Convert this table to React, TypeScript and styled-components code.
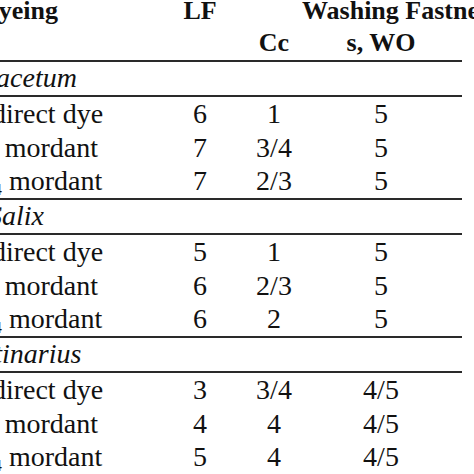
import React from "react";
import styled, { createGlobalStyle } from "styled-components";

const GlobalStyle = createGlobalStyle`
   html, body {
      margin: 0;
      padding: 0;
      background: #ffffff;
      overflow: hidden;
   }
`;

interface GroupData {
   name: string;
   rows: { label: React.ReactNode; lf: string; cc: string; wo: string }[];
}

const Sub = styled.span`
   font-size: 60%;
   line-height: 0;
   vertical-align: -0.3em;
`;

const groups: GroupData[] = [
   {
      name: "Tanacetum",
      rows: [
         { label: "Only direct dye", lf: "6", cc: "1", wo: "5" },
         { label: "Alum mordant", lf: "7", cc: "3/4", wo: "5" },
         { label: <>FeSO<Sub>4</Sub> mordant</>, lf: "7", cc: "2/3", wo: "5" },
      ],
   },
   {
      name: "Salix",
      rows: [
         { label: "Only direct dye", lf: "5", cc: "1", wo: "5" },
         { label: "Alum mordant", lf: "6", cc: "2/3", wo: "5" },
         { label: <>FeSO<Sub>4</Sub> mordant</>, lf: "6", cc: "2", wo: "5" },
      ],
   },
   {
      name: "Cortinarius",
      rows: [
         { label: "Only direct dye", lf: "3", cc: "3/4", wo: "4/5" },
         { label: "Alum mordant", lf: "4", cc: "4", wo: "4/5" },
         { label: <>FeSO<Sub>4</Sub> mordant</>, lf: "5", cc: "4", wo: "4/5" },
      ],
   },
];

const App: React.FC = () => {
   return (
      <>
         <GlobalStyle />
         <Frame>
            {/* the table is wider than the shot, so it starts left of and above the frame */}
            <Table>
               <HeaderRow $height={30}>
                  <Cell $shift={6}>Dyeing</Cell>
                  <Cell>LF</Cell>
                  <Cell />
                  <Cell $align="left">Washing Fastness</Cell>
               </HeaderRow>
               <HeaderRow $height={34}>
                  <Cell />
                  <Cell />
                  <Cell>Cc</Cell>
                  <Cell>s, WO</Cell>
               </HeaderRow>
               <Rule />

               {groups.map((group) => (
                  <React.Fragment key={group.name}>
                     <GroupRow>
                        <Cell>{group.name}</Cell>
                     </GroupRow>
                     <Rule />
                     {group.rows.map((row, i) => (
                        <DataRow key={i}>
                           <Cell>{row.label}</Cell>
                           <Cell>{row.lf}</Cell>
                           <Cell>{row.cc}</Cell>
                           <Cell>{row.wo}</Cell>
                        </DataRow>
                     ))}
                     <Rule />
                  </React.Fragment>
               ))}
            </Table>
         </Frame>
      </>
   );
};

export default App;

const Frame = styled.div`
   width: 474px;
   height: 474px;
   overflow: hidden;
   background: #ffffff;
   color: #111111;
   font-family: "Liberation Serif", "Times New Roman", serif;
`;

const Table = styled.div`
   display: flex;
   flex-direction: column;
   width: 582px;
   margin: -4px 0 0 -120px;
`;

const Row = styled.div`
   display: grid;
   grid-template-columns: 272px 96px 52px 162px;
   box-sizing: border-box;
`;

const HeaderRow = styled(Row)<{ $height: number }>`
   height: ${(p) => p.$height}px;
   line-height: ${(p) => p.$height}px;
   font-size: 26px;
   font-weight: 700;
`;

const GroupRow = styled(Row)`
   height: 33px;
   line-height: 31px;
   padding-bottom: 2px;
   font-size: 28px;
   font-style: italic;
`;

const DataRow = styled(Row)`
   height: 33.667px;
   line-height: 33.667px;
   font-size: 28px;
`;

const Cell = styled.div<{ $align?: "left" | "center"; $shift?: number }>`
   text-align: ${(p) => p.$align ?? "center"};
   white-space: nowrap;
   padding-left: ${(p) => (p.$align === "left" ? 2 : 0) + (p.$shift ?? 0)}px;
`;

const Rule = styled.div`
   height: 2px;
   background-color: #2a2a2a;
`;
